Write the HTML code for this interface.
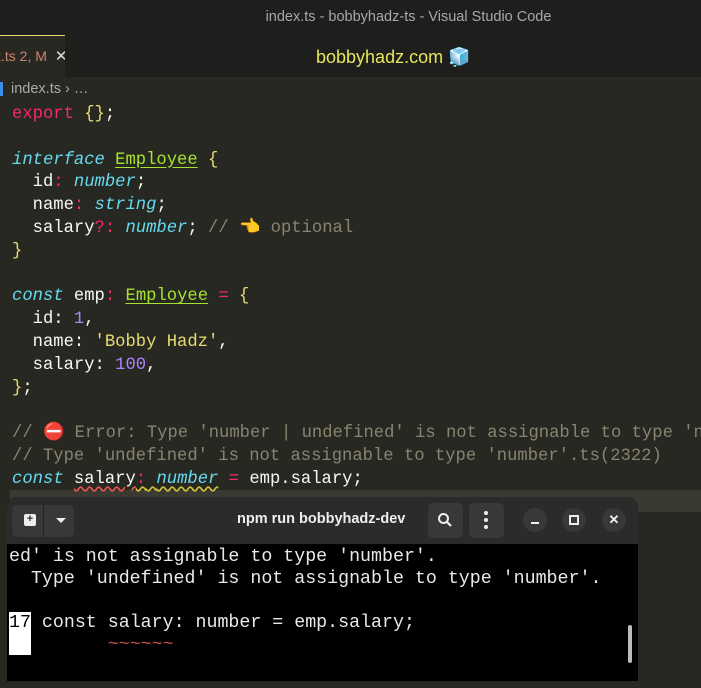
<!DOCTYPE html>
<html><head><meta charset="utf-8"><style>
*{margin:0;padding:0;box-sizing:border-box}
body{width:701px;height:688px;overflow:hidden;background:#272822;position:relative;font-family:"Liberation Sans",sans-serif}
.title{position:absolute;left:0;top:0;width:701px;height:35px;background:#1e1e1e;color:#a8a8a8;font-size:14.5px;text-align:center;line-height:35px;padding-left:116px}
.tabbar{position:absolute;left:0;top:35px;width:701px;height:42px;background:#1e1f1c}
.tab{position:absolute;left:0;top:0;width:65px;height:42px;background:#272822;border-top:1px solid #e6db74;overflow:hidden}
.tab span.in{position:absolute;left:-6px;top:0;white-space:nowrap;color:#d0826e;font-size:14px;line-height:40px}
.tab .x{color:#ddd;margin-left:8px;font-size:15px}
.brand{position:absolute;left:316px;top:47px;color:#e6e65a;font-size:18px}
.crumb{position:absolute;left:0;top:81px;color:#aaa;font-size:14.5px}
.crumb b{display:inline-block;width:3px;height:14px;background:#3b8eea;vertical-align:middle;margin-right:8px}
.code{position:absolute;left:12px;top:104px;font-family:"Liberation Mono",monospace;font-size:17.2px;line-height:22.8px;color:#f8f8f2;white-space:pre}
.k{color:#66d9ef;font-style:italic}.r{color:#f92672}.y{color:#e6db74}.g{color:#a6e22e;text-decoration:underline;text-decoration-color:#a6e22e;text-underline-offset:3px}
.c{color:#88846f}.p{color:#ae81ff}.t{color:#66d9ef;font-style:italic}
.sq{text-decoration:underline wavy #e8554e;text-underline-offset:3px}
.sqy{text-decoration:underline wavy #cfbf3a;text-underline-offset:3px}
.hl{position:absolute;left:10px;top:490px;width:691px;height:22px;background:#3a3a33}
.term{position:absolute;left:7px;top:497px;width:631px;height:184px;background:#000;border-radius:10px 10px 0 0;overflow:hidden}
.th{height:47px;background:#2b2b2b;position:relative}
.btn{position:absolute;background:#383838;border-radius:5px}
.circ{position:absolute;width:24px;height:24px;border-radius:50%;background:#383838;top:11px;color:#eee;font-size:13px;text-align:center;line-height:24px;font-weight:bold}
.tt{position:absolute;left:230px;top:14px;color:#eee;font-size:14.5px;font-weight:bold}
.tb{position:relative;font-family:"Liberation Mono",monospace;font-size:18.3px;line-height:22px;color:#e8e8e8;white-space:pre;padding-left:2px;padding-top:2px}
.cur{color:#000;position:relative}
</style></head><body>
<div class="title">index.ts - bobbyhadz-ts - Visual Studio Code</div>
<div class="tabbar"><div class="tab"><span class="in">x.ts 2, M<span class="x">✕</span></span></div></div>
<div class="brand">bobbyhadz.com 🧊</div>
<div class="crumb"><b></b>index.ts › …</div>
<div class="hl"></div>
<div class="code"><span class="r">export</span> <span class="y">{}</span>;

<span class="k">interface</span> <span class="g">Employee</span> <span class="y">{</span>
  id<span class="r">:</span> <span class="t">number</span>;
  name<span class="r">:</span> <span class="t">string</span>;
  salary<span class="r">?:</span> <span class="t">number</span>; <span class="c">// 👈 optional</span>
<span class="y">}</span>

<span class="k">const</span> emp<span class="r">:</span> <span class="g">Employee</span> <span class="r">=</span> <span class="y">{</span>
  id: <span class="p">1</span>,
  name: <span class="y">'Bobby Hadz'</span>,
  salary: <span class="p">100</span>,
<span class="y">}</span>;

<span class="c">// ⛔ Error: Type 'number | undefined' is not assignable to type 'n</span>
<span class="c">// Type 'undefined' is not assignable to type 'number'.ts(2322)</span>
<span class="k">const</span> <span class="sq">salary</span><span class="sqy"><span class="r">:</span> <span class="t">number</span></span> <span class="r">=</span> emp.salary;</div>
<div class="term">
 <div class="th">
  <div class="btn" style="left:5px;top:8px;width:62px;height:32px"></div>
  <div style="position:absolute;left:36px;top:8px;width:1px;height:32px;background:#222"></div>
  <div style="position:absolute;left:17px;top:17px;width:12px;height:12px;background:#eee;border-radius:2px;color:#333;font-size:11px;line-height:11px;text-align:center;font-weight:bold">+</div>
  <div style="position:absolute;left:49px;top:21px;border-left:5px solid transparent;border-right:5px solid transparent;border-top:5px solid #eee"></div>
  <div class="tt">npm run bobbyhadz-dev</div>
  <div class="btn" style="left:421px;top:6px;width:35px;height:35px"></div>
  <svg style="position:absolute;left:430px;top:15px" width="16" height="16" viewBox="0 0 16 16"><circle cx="6.5" cy="6.5" r="4.5" fill="none" stroke="#eee" stroke-width="2"/><path d="M10 10L14 14" stroke="#eee" stroke-width="2.2"/></svg>
  <div class="btn" style="left:462px;top:6px;width:35px;height:35px"></div>
  <div style="position:absolute;left:477px;top:14px;width:4px;height:4px;border-radius:50%;background:#eee;box-shadow:0 7px 0 #eee,0 14px 0 #eee"></div>
  <div class="circ" style="left:516px"><div style="position:absolute;left:8px;top:14px;width:8px;height:2px;background:#eee"></div></div>
  <div class="circ" style="left:555px"><div style="position:absolute;left:7px;top:7px;width:10px;height:10px;border:2px solid #eee"></div></div>
  <div class="circ" style="left:595px">✕</div>
 </div>
 <div style="position:absolute;left:2px;top:115px;width:22px;height:43px;background:#fff"></div>
 <div class="tb">ed' is not assignable to type 'number'.
  Type 'undefined' is not assignable to type 'number'.

<span class="cur">17</span> const salary: number = emp.salary;
         <span style="color:#c0504d">~~~~~~</span></div>
 <div style="position:absolute;left:621px;top:128px;width:4px;height:38px;background:#bbb;border-radius:2px"></div>
</div>
</body></html>
